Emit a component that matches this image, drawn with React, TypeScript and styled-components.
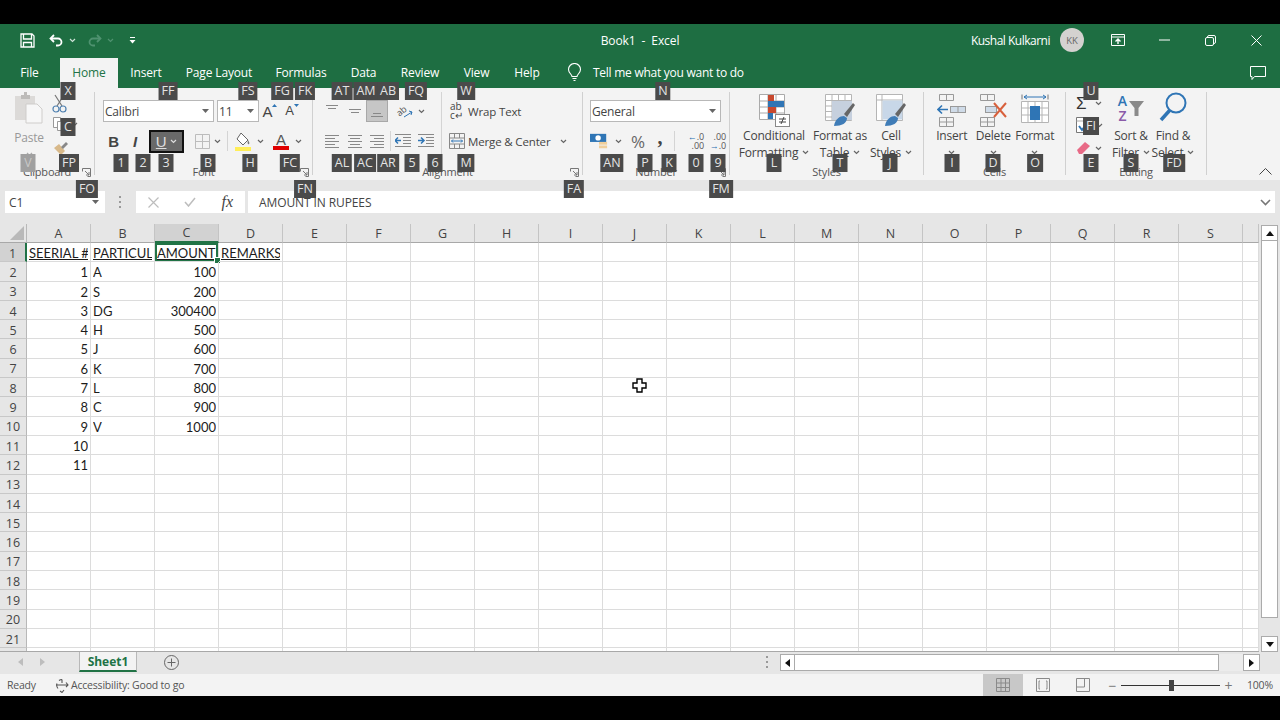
import React from 'react';
import styled, { createGlobalStyle } from 'styled-components';

const UI_FONT = '"Open Sans", "Noto Sans", sans-serif';
const GREEN = '#217346';

const GlobalStyle = createGlobalStyle`
  html, body { margin: 0; padding: 0; background: #000; }
  body { font-family: ${UI_FONT}; width: 1280px; height: 720px; overflow: hidden; }
  #root { width: 1280px; height: 720px; }
  svg { display: block; flex: none; }
`;

const Page = styled.div`
  position: relative;
  width: 1280px;
  height: 720px;
  padding: 24px 0;
  box-sizing: border-box;
  background: #000;
`;

const Excel = styled.div`
  display: flex;
  flex-direction: column;
  height: 672px;
  background: #e6e6e6;
  overflow: hidden;
`;

/* ---- title bar ---- */
const GreenHead = styled.div`
  background: #1e6e42;
  color: #fff;
  flex: none;
`;
const TitleBar = styled.div`
  display: grid;
  grid-template-columns: 1fr auto 1fr;
  align-items: center;
  height: 32px;
  font-size: 12px;
`;
const Qat = styled.div`
  display: flex;
  align-items: center;
  padding-left: 20px;
`;
const QatSlot = styled.div<{ $w: number }>`
  width: ${p => p.$w}px;
  display: flex;
  align-items: center;
`;
const WindowTitle = styled.div`
  font-size: 12px;
  letter-spacing: -0.1px;
  white-space: pre;
  padding-top: 1px;
`;
const WindowRight = styled.div`
  display: flex;
  align-items: center;
  justify-content: flex-end;
  padding-right: 1px;
`;
const UserName = styled.span`
  font-size: 12px;
  letter-spacing: -0.5px;
  margin-right: 10px;
`;
const Avatar = styled.div`
  width: 24px;
  height: 24px;
  border-radius: 50%;
  background: #d4d2d0;
  color: #666;
  font-size: 9.5px;
  display: flex;
  align-items: center;
  justify-content: center;
  margin-right: 11px;
`;
const CaptionBtn = styled.div`
  width: 46px;
  height: 32px;
  display: flex;
  align-items: center;
  justify-content: center;
`;

/* ---- tabs ---- */
const TabBar = styled.div`
  display: flex;
  align-items: flex-end;
  height: 32px;
  padding-left: 8px;
  font-size: 12px;
  letter-spacing: -0.15px;
`;
const Tab = styled.div<{ $w: number; $active?: boolean; $mr?: number }>`
  width: ${p => p.$w}px;
  margin-right: ${p => p.$mr ?? 0}px;
  height: 30px;
  padding-bottom: 2px;
  display: flex;
  align-items: center;
  justify-content: center;
  box-sizing: border-box;
  white-space: nowrap;
  background: ${p => (p.$active ? '#f3f3f3' : 'transparent')};
  color: ${p => (p.$active ? GREEN : '#fff')};
`;
const TellMe = styled.div`
  display: flex;
  align-items: center;
  gap: 11px;
  height: 30px;
  padding-bottom: 2px;
  box-sizing: border-box;
  margin-left: 15px;
  flex: 1;
  letter-spacing: -0.26px;
`;
const CommentBtn = styled.div`
  height: 30px;
  display: flex;
  align-items: center;
  padding-right: 14px;
`;

/* ---- ribbon ---- */
const Ribbon = styled.div`
  display: flex;
  height: 92px;
  padding: 4px 0 5px;
  box-sizing: border-box;
  background: #f3f3f3;
  color: #444;
  font-size: 12px;
  letter-spacing: -0.2px;
  flex: none;
`;
const Group = styled.div<{ $w: number }>`
  width: ${p => p.$w}px;
  flex: none;
  box-sizing: border-box;
  border-right: 1px solid #d0d0d0;
  display: flex;
  flex-direction: column;
`;
const GroupBody = styled.div<{ $pl?: number; $top?: number; $gap?: number }>`
  flex: 1;
  display: flex;
  min-height: 0;
  padding-left: ${p => p.$pl ?? 0}px;
  padding-top: ${p => p.$top ?? 0}px;
  gap: ${p => p.$gap ?? 0}px;
`;
const GroupLabel = styled.div`
  position: relative;
  height: 14px;
  margin-bottom: -4px;
  font-size: 11px;
  line-height: 14px;
  text-align: center;
  color: #555;
`;
const Launcher = styled.span`
  position: absolute;
  right: 3px;
  top: 3px;
`;
const Stack = styled.div<{ $gap?: number }>`
  display: flex;
  flex-direction: column;
  gap: ${p => p.$gap ?? 8}px;
`;
const AlignStack = styled(Stack)`
  width: 121px;
  height: 83px;
  box-sizing: border-box;
  margin-top: -8px;
  padding-top: 8px;
  border-right: 1px solid #d4d4d4;
`;
const Row = styled.div`
  display: flex;
  align-items: center;
  height: 22px;
`;
const Btn = styled.div<{ $w: number; $on?: boolean }>`
  width: ${p => p.$w}px;
  height: 22px;
  display: flex;
  align-items: center;
  justify-content: center;
  flex: none;
  background: ${p => (p.$on ? '#c6c6c6' : 'transparent')};
  box-shadow: ${p => (p.$on ? 'inset 0 0 0 1px #a8a8a8' : 'none')};
`;
const SmallGap = styled.div<{ $w: number }>`
  width: ${p => p.$w}px;
  height: 22px;
  flex: none;
`;
const ThinSep = styled.div`
  width: 1px;
  height: 20px;
  background: #d4d4d4;
  flex: none;
`;
const Select = styled.div<{ $w: number }>`
  width: ${p => p.$w}px;
  height: 22px;
  box-sizing: border-box;
  flex: none;
  display: flex;
  align-items: center;
  justify-content: space-between;
  padding: 0 4px 0 1px;
  background: #fff;
  border: 1px solid #b8b8b8;
  color: #444;
  font-size: 12px;
`;
const FontLetter = styled.span<{ $size?: number; $bold?: boolean; $italic?: boolean; $under?: boolean; $color?: string }>`
  font-family: "Liberation Sans", sans-serif;
  font-size: ${p => p.$size ?? 15}px;
  font-weight: ${p => (p.$bold ? 700 : 400)};
  font-style: ${p => (p.$italic ? 'italic' : 'normal')};
  text-decoration: ${p => (p.$under ? 'underline' : 'none')};
  color: ${p => p.$color ?? '#444'};
  line-height: 1;
`;
const UnderBtn = styled.div`
  width: 35px;
  height: 23px;
  flex: none;
  box-sizing: border-box;
  border: 2px solid #111;
  background: #696969;
  display: flex;
  align-items: center;
  justify-content: space-around;
  padding: 0 3px;
`;
const ColorLetter = styled.div<{ $bar: string }>`
  display: flex;
  flex-direction: column;
  align-items: center;
  width: 18px;
  color: #555;
  font-family: "Liberation Sans", sans-serif;
  font-size: 15px;
  line-height: 13px;
  &::after {
    content: '';
    width: 16px;
    height: 4px;
    background: ${p => p.$bar};
  }
`;
const WrapGlyph = styled.div`
  font-size: 10px;
  line-height: 9px;
  width: 15px;
  color: #444;
  letter-spacing: 0;
`;
const TextBtn = styled.div<{ $w: number; $gap: number }>`
  display: flex;
  align-items: center;
  width: ${p => p.$w}px;
  gap: ${p => p.$gap}px;
  height: 22px;
  font-size: 11.5px;
  letter-spacing: -0.15px;
  color: #444;
  white-space: nowrap;
`;
const DecimalGlyph = styled.div`
  font-size: 9px;
  line-height: 9px;
  color: #555;
  letter-spacing: 0;
  text-align: right;
  & b {
    color: #2a6fb0;
    font-weight: 700;
  }
`;
const Percent = styled.span`
  font-size: 17px;
  color: #666;
  letter-spacing: 0;
`;
const Comma = styled.span`
  font-size: 20px;
  line-height: 10px;
  margin-top: -8px;
  font-weight: 700;
  color: #444;
  font-family: "Liberation Serif", serif;
`;
const BigBtn = styled.div<{ $w: number }>`
  width: ${p => p.$w}px;
  flex: none;
  display: flex;
  flex-direction: column;
  align-items: center;
`;
const IconSlot = styled.div<{ $h?: number }>`
  height: ${p => p.$h ?? 36}px;
  display: flex;
  align-items: flex-start;
  justify-content: center;
`;
const BigText = styled.div<{ $color?: string }>`
  line-height: 16px;
  text-align: center;
  white-space: nowrap;
  color: ${p => p.$color ?? '#444'};
`;
const ChevLine = styled.span`
  display: flex;
  align-items: center;
  justify-content: center;
  gap: 4px;
  height: 16px;
  white-space: nowrap;
`;
const SmallCol = styled.div`
  display: flex;
  flex-direction: column;
  width: 36px;
  flex: none;
`;
const SmallItem = styled.div<{ $h: number; $pl?: number }>`
  height: ${p => p.$h}px;
  display: flex;
  align-items: center;
  gap: 4px;
  padding-left: ${p => p.$pl ?? 10}px;
`;
const Sigma = styled.span`
  font-family: "Liberation Sans", sans-serif;
  font-size: 17px;
  line-height: 1;
  color: #333;
  width: 15px;
`;
const SortGlyph = styled.div`
  display: flex;
  align-items: center;
  gap: 2px;
  margin-top: 1px;
`;
const AzText = styled.div`
  font-size: 14px;
  line-height: 15px;
  font-weight: 600;
  color: #2f75b5;
  letter-spacing: 0;
  text-align: center;
  & i {
    display: block;
    font-style: normal;
    color: #8a5aa8;
  }
`;
const Collapse = styled.div`
  flex: 1;
  display: flex;
  align-items: flex-end;
  justify-content: flex-end;
  padding: 0 8px 0 0;
`;

/* ---- formula bar ---- */
const FormulaBar = styled.div`
  display: flex;
  align-items: center;
  height: 44px;
  padding: 0 5px 0 5px;
  box-sizing: border-box;
  flex: none;
  background: #e6e6e6;
  color: #444;
  font-size: 12px;
`;
const NameBox = styled.div`
  width: 100px;
  height: 22px;
  box-sizing: border-box;
  background: #fff;
  display: flex;
  align-items: center;
  justify-content: space-between;
  padding: 0 6px 0 4px;
`;
const Grip = styled.div`
  width: 31px;
  display: flex;
  justify-content: center;
`;
const FxBox = styled.div`
  width: 109px;
  height: 22px;
  background: #fff;
  display: flex;
  align-items: center;
  justify-content: space-between;
  padding: 0 12px 0 12px;
  box-sizing: border-box;
  margin-right: 3px;
`;
const FxText = styled.span`
  font-family: "Liberation Serif", serif;
  font-style: italic;
  font-size: 16px;
  color: #444;
`;
const FormulaInput = styled.div`
  flex: 1;
  height: 22px;
  background: #fff;
  display: flex;
  align-items: center;
  justify-content: space-between;
  padding: 0 4px 0 11px;
  box-sizing: border-box;
  letter-spacing: -0.1px;
`;

/* ---- sheet ---- */
const SheetArea = styled.div`
  display: flex;
  height: 428px;
  flex: none;
  background: #e6e6e6;
`;
const SheetGrid = styled.div`
  width: 1259px;
  height: 427px;
  overflow: hidden;
  flex: none;
  display: grid;
  grid-template-columns: 27px repeat(19, 64px) 16px;
  grid-template-rows: 19px repeat(22, 19.3px);
  background: #fff;
  border-bottom: 1px solid #a8a8a8;
`;
const Corner = styled.div`
  position: relative;
  background: #e6e6e6;
  border-right: 1px solid #b8b8b8;
  border-bottom: 1px solid #a8a8a8;
  box-sizing: border-box;
  &::after {
    content: '';
    position: absolute;
    right: 2px;
    bottom: 2px;
    width: 14px;
    height: 14px;
    background: #b9b9b9;
    clip-path: polygon(100% 0, 100% 100%, 0 100%);
  }
`;
const ColHead = styled.div<{ $active?: boolean }>`
  background: ${p => (p.$active ? '#d2d2d2' : '#e6e6e6')};
  border-right: 1px solid #c4c4c4;
  border-bottom: ${p => (p.$active ? `2px solid ${GREEN}` : '1px solid #a8a8a8')};
  box-sizing: border-box;
  display: flex;
  align-items: center;
  justify-content: center;
  font-size: 12.5px;
  color: #444;
`;
const RowHead = styled.div<{ $active?: boolean }>`
  background: ${p => (p.$active ? '#d2d2d2' : '#e6e6e6')};
  border-right: ${p => (p.$active ? `2px solid ${GREEN}` : '1px solid #b8b8b8')};
  border-bottom: 1px solid #c8c8c8;
  box-sizing: border-box;
  display: flex;
  align-items: center;
  justify-content: center;
  padding-top: 2px;
  font-size: 12.5px;
  color: #444;
`;
const Cell = styled.div<{ $selected?: boolean }>`
  position: relative;
  border-right: 1px solid #dcdcdc;
  border-bottom: 1px solid #dcdcdc;
  box-sizing: border-box;
  box-shadow: ${p => (p.$selected ? `inset 0 0 0 2px ${GREEN}` : 'none')};
  &::after {
    content: '';
    display: ${p => (p.$selected ? 'block' : 'none')};
    position: absolute;
    right: -3px;
    bottom: -3px;
    width: 5px;
    height: 5px;
    background: ${GREEN};
    border: 1px solid #fff;
  }
`;
const CellText = styled.div<{ $right?: boolean; $under?: boolean; $spaced?: boolean }>`
  height: 100%;
  margin: 0 2px;
  overflow: hidden;
  font-family: Lato, "Open Sans", sans-serif;
  font-size: 13px;
  line-height: 20px;
  color: #1c1c1c;
  white-space: nowrap;
  word-spacing: ${p => (p.$spaced ? '8px' : 'normal')};
  text-align: ${p => (p.$right ? 'right' : 'left')};
  text-decoration: ${p => (p.$under ? 'underline' : 'none')};
`;
const VScroll = styled.div`
  width: 17px;
  margin-left: 2px;
  display: flex;
  flex-direction: column;
  padding-top: 1px;
`;
const ScrollBtn = styled.div<{ $w?: number; $h?: number }>`
  width: ${p => p.$w ?? 17}px;
  height: ${p => p.$h ?? 16}px;
  box-sizing: border-box;
  flex: none;
  background: #fff;
  border: 1px solid #ababab;
  display: flex;
  align-items: center;
  justify-content: center;
`;
const VThumb = styled.div`
  height: 377px;
  box-sizing: border-box;
  background: #fff;
  border: 1px solid #ababab;
  border-top: none;
  flex: none;
`;
const VTrack = styled.div`
  flex: 1;
`;

/* ---- sheet tabs + status ---- */
const TabsRow = styled.div`
  height: 22px;
  flex: none;
  display: flex;
  align-items: flex-start;
  background: #e6e6e6;
  color: #555;
`;
const NavArrows = styled.div`
  width: 79px;
  height: 20px;
  display: flex;
  align-items: center;
  padding-left: 18px;
  gap: 17px;
  box-sizing: border-box;
`;
const SheetTab = styled.div`
  width: 58px;
  height: 20px;
  box-sizing: border-box;
  background: #f3f3f3;
  color: ${GREEN};
  font-size: 12px;
  font-weight: 700;
  display: flex;
  align-items: center;
  justify-content: center;
  border-left: 1px solid #b8b8b8;
  border-right: 1px solid #b8b8b8;
  border-bottom: 2px solid ${GREEN};
`;
const AddSheet = styled.div`
  width: 68px;
  height: 20px;
  display: flex;
  align-items: center;
  justify-content: center;
`;
const Grow = styled.div`
  flex: 1;
`;
const TabGrip = styled.div`
  width: 25px;
  height: 20px;
  display: flex;
  align-items: center;
  justify-content: center;
`;
const HScroll = styled.div`
  width: 480px;
  display: flex;
  margin: 2px 20px 0 0;
`;
const HThumb = styled.div`
  width: 424px;
  height: 17px;
  box-sizing: border-box;
  background: #fff;
  border: 1px solid #ababab;
  border-left: none;
`;
const HTrack = styled.div`
  flex: 1;
  background: #ececec;
`;
const StatusBar = styled.div`
  height: 22px;
  flex: none;
  background: #f3f3f3;
  color: #555;
  display: flex;
  align-items: center;
  font-size: 10.5px;
  letter-spacing: -0.2px;
  padding-left: 7px;
`;
const Ready = styled.span`
  width: 48px;
`;
const Access = styled.div`
  display: flex;
  align-items: center;
  gap: 2px;
  flex: 1;
`;
const ViewBtn = styled.div<{ $on?: boolean }>`
  width: 40px;
  height: 22px;
  display: flex;
  align-items: center;
  justify-content: center;
  background: ${p => (p.$on ? '#c8c8c8' : 'transparent')};
`;
const ZoomBox = styled.div`
  display: flex;
  align-items: center;
  width: 177px;
`;
const ZoomSign = styled.span`
  width: 19px;
  text-align: center;
  font-size: 14px;
  color: #777;
`;
const ZoomTrack = styled.div`
  position: relative;
  width: 99px;
  height: 1px;
  margin: 0 -1px;
  background: #333;
`;
const ZoomThumb = styled.div`
  position: absolute;
  left: 48px;
  top: -5px;
  width: 5px;
  height: 11px;
  background: #444;
`;
const ZoomPct = styled.span`
  margin-left: 9px;
  white-space: nowrap;
`;

/* ---- things lying over the page ---- */
const KeyTip = styled.div<{ $x: number; $y: number; $dim?: boolean }>`
  position: absolute;
  left: ${p => p.$x}px;
  top: ${p => p.$y}px;
  transform: translate(-50%, -50%);
  height: 18px;
  min-width: 15px;
  padding: 0 3px;
  box-sizing: border-box;
  background: ${p => (p.$dim ? '#a0a0a0' : '#4a4a4a')};
  color: ${p => (p.$dim ? '#c8c8c8' : '#e4e4e4')};
  font-size: 12.5px;
  line-height: 18px;
  text-align: center;
  white-space: nowrap;
`;
const Pointer = styled.div`
  position: absolute;
  left: 632px;
  top: 378px;
`;

/* ---- icons ---- */
const Chev = ({ c = '#666' }: { c?: string }) => (
  <svg width="7" height="5" viewBox="0 0 7 5"><path d="M1 1l2.5 2.5L6 1" fill="none" stroke={c} strokeWidth="1.2" /></svg>
);
const WideChev = () => (
  <svg width="11" height="7" viewBox="0 0 11 7"><path d="M1 1l4.500 4.500L10 1" fill="none" stroke="#777" strokeWidth="1.600" /></svg>
);
const Caret = () => (
  <svg width="7" height="4" viewBox="0 0 7 4"><path d="M0 0h7L3.5 4z" fill="#666" /></svg>
);
const LauncherIcon = () => (
  <svg width="9" height="9" viewBox="0 0 9 9"><path d="M.5 3.5v-3h8v8h-3M3 3l4 4M7 4v3H4" fill="none" stroke="#777" /></svg>
);
const SaveIcon = () => (
  <svg width="15" height="15" viewBox="0 0 15 15" fill="none" stroke="#fff" strokeWidth="1.3">
    <path d="M1 1h11l2 2v11H1z" /><path d="M3.5 1v5h8V1M3.5 14V9.5h8V14" />
  </svg>
);
const UndoIcon = ({ c = '#fff' }: { c?: string }) => (
  <svg width="15" height="13" viewBox="0 0 15 13" fill="none" stroke={c} strokeWidth="1.8">
    <path d="M5 1L1.5 4.5 5 8" /><path d="M2 4.5h7a3.5 3.5 0 0 1 0 7H7" />
  </svg>
);
const RedoIcon = () => (
  <svg width="15" height="13" viewBox="0 0 15 13" fill="none" stroke="#4f9270" strokeWidth="1.8">
    <path d="M10 1l3.5 3.5L10 8" /><path d="M13 4.5H6a3.5 3.5 0 0 0 0 7h2" />
  </svg>
);
const QatMore = () => (
  <svg width="7" height="7" viewBox="0 0 7 7"><path d="M1 .5h5" stroke="#fff" /><path d="M.5 3h6L3.5 6.5z" fill="#fff" /></svg>
);
const RibbonDisplayIcon = () => (
  <svg width="14" height="12" viewBox="0 0 14 12" fill="none" stroke="#fff"><path d="M.5.500h13v11H.5zM.5 3h13" /><path d="M7 10V5M4.500 7.500L7 5l2.500 2.500" strokeWidth="1.400" /></svg>
);
const MinIcon = () => <svg width="11" height="2" viewBox="0 0 11 2"><path d="M0 1h11" stroke="#fff" /></svg>;
const RestoreIcon = () => (
  <svg width="11" height="11" viewBox="0 0 11 11" fill="none" stroke="#fff"><rect x=".5" y="2.500" width="8" height="8" rx="1.500" /><path d="M2.500 2.500v-.5a1.500 1.500 0 0 1 1.500-1.500h5a1.500 1.500 0 0 1 1.500 1.500v5a1.500 1.500 0 0 1-1.500 1.500h-.5" /></svg>
);
const CloseIcon = () => <svg width="11" height="11" viewBox="0 0 11 11"><path d="M.5.500l10 10M10.500.500l-10 10" stroke="#fff" /></svg>;
const BulbIcon = () => (
  <svg width="15" height="18" viewBox="0 0 15 18" fill="none" stroke="#fff" strokeWidth="1.100">
    <path d="M5 13.500c0-2-3.500-3.500-3.500-7a6 6 0 0 1 12 0c0 3.500-3.500 5-3.500 7zM5.500 15.500h4M6.500 17.500h2" />
  </svg>
);
const CommentIcon = () => (
  <svg width="16" height="15" viewBox="0 0 16 15" fill="none" stroke="#fff"><path d="M.5.500h15v10h-11l-2.500 3v-3H.5z" /></svg>
);
const PasteIcon = () => (
  <svg width="28" height="32" viewBox="0 0 28 32">
    <path d="M0 4h20v24H0z" fill="#dcdad8" />
    <path d="M6 3h3V0h3v3h3v4H6z" fill="#bdbbb9" />
    <path d="M11 12h11l5 5v14H11z" fill="#f7f7f7" stroke="#cfcdcb" />
  </svg>
);
const ScissorsIcon = () => (
  <svg width="15" height="19" viewBox="0 0 15 19" fill="none">
    <path d="M3 1l7 11M12 1L5 12" stroke="#777" strokeWidth="1.200" />
    <circle cx="4" cy="15" r="3" stroke="#4f80b0" strokeWidth="1.200" />
    <circle cx="11" cy="15" r="3" stroke="#4f80b0" strokeWidth="1.200" />
  </svg>
);
const CopyIcon = () => (
  <svg width="14" height="14" viewBox="0 0 14 14" fill="#fff" stroke="#999"><path d="M.5.500h7v10h-7z" /><path d="M4.500 4.500h6l3 3v6h-9z" /></svg>
);
const BrushIcon = () => (
  <svg width="16" height="15" viewBox="0 0 16 15">
    <path d="M1 7l5-4 6 7-4 4z" fill="#d8b98a" />
    <path d="M8 6l5-5 2 2-5 5z" fill="#888" />
  </svg>
);
const GrowGlyph = ({ up }: { up: boolean }) => (
  <svg width="5" height="3" viewBox="0 0 5 3"><path d={up ? 'M0 3h5L2.500 0z' : 'M0 0h5L2.500 3z'} fill="#2f75b5" /></svg>
);
const GrowMark = styled.span`
  display: flex;
  align-items: flex-start;
  height: 15px;
`;
const BordersIcon = () => (
  <svg width="15" height="15" viewBox="0 0 15 15" fill="none" stroke="#bcbcbc"><path d="M.5.500h14v14H.5zM7.500.500v14M.5 7.500h14" /></svg>
);
const FillIcon = () => (
  <svg width="18" height="19" viewBox="0 0 18 19">
    <path d="M7 1l7 7-5 5-6-6z" fill="#fff" stroke="#666" />
    <path d="M14 8c1 2 2 3 1 4s-2-1-1-4z" fill="#777" />
    <rect x="1" y="15" width="16" height="4" fill="#ffee58" />
  </svg>
);
const LinesIcon = ({ ys, xs }: { ys: number[]; xs?: [number, number][] }) => (
  <svg width="14" height="14" viewBox="0 0 14 14" stroke="#888">
    {ys.map((y, i) => {
      const [a, b] = xs ? xs[i % xs.length] : [0, 14];
      return <path key={y} d={`M${a} ${y + 0.5}H${b}`} />;
    })}
  </svg>
);
const IndentIcon = ({ flip }: { flip?: boolean }) => (
  <svg width="16" height="14" viewBox="0 0 16 14">
    <path d="M0 .5h16M8 3.500h8M8 6.500h8M8 9.500h8M0 12.500h16" stroke="#888" />
    <path d={flip ? 'M0 6.500h6M3 3.500l3 3-3 3' : 'M6 6.500H0M3 3.500l-3 3 3 3'} fill="none" stroke="#2f75b5" strokeWidth="1.500" />
  </svg>
);
const OrientIcon = () => (
  <svg width="17" height="16" viewBox="0 0 17 16" overflow="visible">
    <text x="1" y="11" fontSize="9" fill="#555" fontFamily="Open Sans" transform="rotate(-40 6 9)">ab</text>
    <path d="M8 14l8-5M13 8l3 1-1 3" fill="none" stroke="#2f75b5" />
  </svg>
);
const MergeIcon = () => (
  <svg width="16" height="16" viewBox="0 0 16 16" fill="none" stroke="#888">
    <path d="M.5.500h15v15H.5zM.5 5h15M.5 11h15M5.500.500V5M10.500.500V5M5.500 11v4.500M10.500 11v4.500" />
    <path d="M2.500 8h11M4 6.500L2.500 8 4 9.500M12 6.500L13.500 8 12 9.500" stroke="#2f75b5" />
  </svg>
);
const AccountingIcon = () => (
  <svg width="18" height="17" viewBox="0 0 20 17">
    <rect x="0" y="0" width="18" height="9" fill="#2f75b5" />
    <circle cx="9" cy="4.500" r="3" fill="#fff" />
    <rect x="10" y="9" width="9" height="3" fill="#f0cf9b" />
    <rect x="10" y="13" width="9" height="3" fill="#f0cf9b" />
  </svg>
);
const ConditionalIcon = () => (
  <svg width="31" height="33" viewBox="0 0 31 33">
    <path d="M.5.500h25v25H.5zM.5 7h25M.5 13h25M.5 19h25M9 .500v25M17 .500v25" fill="#fff" stroke="#aaa" />
    <rect x="9" y="1" width="6" height="6" fill="#c8492f" />
    <rect x="9" y="7" width="16" height="6" fill="#2f75b5" />
    <rect x="9" y="13" width="8" height="6" fill="#c8492f" />
    <rect x="9" y="19" width="5" height="6" fill="#2f75b5" />
    <rect x="16.500" y="20.500" width="14" height="12" fill="#fff" stroke="#888" />
    <path d="M20 25h7M20 28h7M25 23l-3 7" stroke="#444" fill="none" />
  </svg>
);
const TableStyleIcon = () => (
  <svg width="30" height="34" viewBox="0 0 30 34">
    <path d="M.5.500h26v26H.5zM.5 6.500h26M.5 12h26M.5 17.500h26M.5 23h26M7 .500v26M13.500.500v26M20 .500v26" fill="#fff" stroke="#b5b5b5" />
    <rect x="7" y="7" width="20" height="19" fill="#c6d0de" />
    <path d="M19 20L28 9l2 2-8 12z" fill="#666" />
    <path d="M9 32c1-7 6-10 10-10l3 2c0 5-5 8-13 8z" fill="#3f7cb7" />
  </svg>
);
const CellStyleIcon = () => (
  <svg width="30" height="33" viewBox="0 0 30 33">
    <path d="M.5.500h26v26H.5zM.5 6h26M6 .500v26" fill="#fff" stroke="#b5b5b5" />
    <rect x="6.500" y="6.500" width="20" height="19" fill="#c8d7e8" />
    <path d="M19 20L28 9l2 2-8 12z" fill="#666" />
    <path d="M9 32c1-7 6-10 10-10l3 2c0 5-5 8-13 8z" fill="#3f7cb7" />
  </svg>
);
const InsertIcon = () => (
  <svg width="29" height="33" viewBox="0 0 29 33" fill="none" stroke="#999">
    <path d="M2.500.500h14v6h-14zM9.500.500v6M2.500 23.500h14v9h-14zM2.500 28h14M9.500 23.500v9" />
    <rect x="13.500" y="12.500" width="15" height="6" fill="#cfdbe8" />
    <path d="M21 12.500v6" />
    <path d="M1 15.500h10M5 11.500l-4 4 4 4" stroke="#2f75b5" strokeWidth="1.600" />
  </svg>
);
const DeleteIcon = () => (
  <svg width="29" height="33" viewBox="0 0 29 33" fill="none" stroke="#999">
    <path d="M1.500.500h14v6h-14zM8.500.500v6M1.500 23.500h14v9h-14zM1.500 28h14M8.500 23.500v9" />
    <rect x="6.500" y="12.500" width="11" height="6" fill="#cfdbe8" />
    <path d="M15 9l12 14M27 9L15 23" stroke="#d8603c" strokeWidth="2" />
  </svg>
);
const FormatIcon = () => (
  <svg width="28" height="35" viewBox="0 0 28 35" fill="none" stroke="#b5b5b5">
    <path d="M1 .5v5M27 .5v5" stroke="#777" />
    <path d="M3 3h22M6 1L3 3l3 2M22 1l3 2-3 2" stroke="#2f75b5" />
    <path d="M.5 7.500h27v21H.5zM.5 14h27M.5 21h27M7 7.500v21M14 7.500v21M21 7.500v21" fill="#fff" />
    <rect x="9" y="12" width="10" height="14" fill="#2f75b5" stroke="none" />
  </svg>
);
const FillDownIcon = () => (
  <svg width="16" height="17" viewBox="0 0 16 17" fill="none">
    <path d="M.5.500h15v15H.5z" stroke="#777" fill="#fff" />
    <path d="M.5 4h15" stroke="#aaa" />
    <path d="M3 9l3 4 5-6" stroke="#2f75b5" strokeWidth="2" />
  </svg>
);
const EraserIcon = () => (
  <svg width="15" height="14" viewBox="0 0 15 14"><path d="M1 9l8-8 5 4-8 8H3z" fill="#e86a86" /></svg>
);
const FunnelIcon = () => (
  <svg width="15" height="15" viewBox="0 0 15 15"><path d="M0 0h15L9.500 7v8h-4V7z" fill="#8a8a8a" /></svg>
);
const FindIcon = () => (
  <svg width="28" height="30" viewBox="0 0 28 30" fill="none">
    <circle cx="17" cy="11" r="9.500" stroke="#2f75b5" strokeWidth="2" />
    <path d="M11 18L2 28" stroke="#2f75b5" strokeWidth="3.500" />
  </svg>
);
const CollapseIcon = () => (
  <svg width="13" height="8" viewBox="0 0 13 8"><path d="M.5 7.500l6-6 6 6" fill="none" stroke="#444" /></svg>
);
const GripDots = () => (
  <svg width="3" height="12" viewBox="0 0 3 12" fill="#999"><rect width="2" height="2" /><rect y="5" width="2" height="2" /><rect y="10" width="2" height="2" /></svg>
);
const XMark = () => <svg width="11" height="11" viewBox="0 0 11 11"><path d="M.5.500l10 10M10.500.500l-10 10" stroke="#bdbdbd" strokeWidth="1.200" /></svg>;
const CheckMark = () => <svg width="12" height="10" viewBox="0 0 12 10"><path d="M1 5l3.500 4L11 1" fill="none" stroke="#bdbdbd" strokeWidth="1.500" /></svg>;
const ArrowUp = () => <svg width="8" height="5" viewBox="0 0 8 5"><path d="M0 5h8L4 0z" fill="#111" /></svg>;
const ArrowDown = () => <svg width="8" height="5" viewBox="0 0 8 5"><path d="M0 0h8L4 5z" fill="#111" /></svg>;
const ArrowLeft = () => <svg width="5" height="8" viewBox="0 0 5 8"><path d="M5 0v8L0 4z" fill="#111" /></svg>;
const ArrowRight = ({ c = '#111' }: { c?: string }) => <svg width="5" height="8" viewBox="0 0 5 8"><path d="M0 0v8l5-4z" fill={c} /></svg>;
const NavLeft = () => <svg width="5" height="8" viewBox="0 0 5 8"><path d="M5 0v8L0 4z" fill="#bdbdbd" /></svg>;
const AddIcon = () => (
  <svg width="15" height="15" viewBox="0 0 15 15" fill="none" stroke="#666"><circle cx="7.500" cy="7.500" r="7" /><path d="M7.500 3.500v8M3.500 7.500h8" /></svg>
);
const AccessIcon = () => (
  <svg width="14" height="15" viewBox="0 0 14 15" fill="none" stroke="#555" strokeWidth="1.100">
    <path d="M4 2.500A5 5 0 0 1 7 1.500M2 5.500a5 5 0 0 0 1 5M5 13l2 1.500L9 12M11 4.500l2 2.500-2 2M1 7h12M7 1.500V5" />
  </svg>
);
const NormalViewIcon = () => (
  <svg width="14" height="14" viewBox="0 0 14 14" fill="none" stroke="#8a8a8a"><path d="M.5.500h13v13H.5zM.5 5h13M.5 9.500h13M5 .500v13M9.500.500v13" /></svg>
);
const PageLayoutIcon = () => (
  <svg width="14" height="14" viewBox="0 0 14 14" fill="none" stroke="#8a8a8a"><path d="M.5.500h13v13H.5z" /><path d="M4 3H3v8h1M10 3h1v8h-1" /></svg>
);
const BreakViewIcon = () => (
  <svg width="14" height="14" viewBox="0 0 14 14" fill="none" stroke="#8a8a8a"><path d="M.5.500h13v13H.5zM.5 9h8V.500" /></svg>
);
const PointerIcon = () => (
  <svg width="15" height="15" viewBox="0 0 15 15"><path d="M5 1h5v4h4v5h-4v4H5v-4H1V5h4z" fill="#fff" stroke="#000" strokeWidth="1.400" /></svg>
);

/* ---- data ---- */
const COLS = 'ABCDEFGHIJKLMNOPQRST'.split('');
const TABS: [string, number, number][] = [
  ['File', 43, 9], ['Home', 58, 0], ['Insert', 56, 0], ['Page Layout', 90, 0],
  ['Formulas', 74, 0], ['Data', 51, 0], ['Review', 62, 0], ['View', 51, 0], ['Help', 50, 0],
];
const CELLS: Record<string, string> = {
  A1: 'SEERIAL #', B1: 'PARTICULARS', C1: 'AMOUNT IN RUPEES', D1: 'REMARKS',
  A2: '1', B2: 'A', C2: '100',
  A3: '2', B3: 'S', C3: '200',
  A4: '3', B4: 'DG', C4: '300400',
  A5: '4', B5: 'H', C5: '500',
  A6: '5', B6: 'J', C6: '600',
  A7: '6', B7: 'K', C7: '700',
  A8: '7', B8: 'L', C8: '800',
  A9: '8', B9: 'C', C9: '900',
  A10: '9', B10: 'V', C10: '1000',
  A11: '10', A12: '11',
};
const TIPS: [string, number, number][] = [
  ['X', 68, 91], ['FF', 168, 91], ['FS', 248, 91], ['FG', 282, 91], ['FK', 305, 91],
  ['AT', 342, 91], ['AM', 366, 91], ['AB', 388, 91], ['FQ', 416, 91], ['W', 466, 91],
  ['N', 663, 91], ['U', 1091, 91], ['C', 68, 127], ['FI', 1091, 126],
  ['V', 28, 163], ['FP', 69, 163], ['1', 121, 163], ['2', 143, 163], ['3', 166, 163],
  ['B', 208, 163], ['H', 250, 163], ['FC', 290, 163], ['AL', 342, 163], ['AC', 365, 163],
  ['AR', 388, 163], ['5', 412, 163], ['6', 435, 163], ['M', 466, 163], ['AN', 612, 163],
  ['P', 645, 163], ['K', 669, 163], ['0', 696, 163], ['9', 718, 163], ['L', 774, 163],
  ['T', 840, 163], ['J', 890, 163], ['I', 952, 163], ['D', 993, 163], ['O', 1035, 163],
  ['E', 1091, 163], ['S', 1131, 163], ['FD', 1174, 163],
  ['FO', 87, 189], ['FN', 305, 189], ['FA', 574, 189], ['FM', 721, 189],
];

const SheetBody = () => {
  const rows = Array.from({ length: 22 }, (_, i) => i + 1);
  return (
    <SheetGrid>
      <Corner />
      {COLS.map((c, i) => (
        <ColHead key={c} $active={c === 'C'}>{i < 19 ? c : ''}</ColHead>
      ))}
      {rows.map(r => (
        <React.Fragment key={r}>
          <RowHead $active={r === 1}>{r < 22 ? r : ''}</RowHead>
          {COLS.map(c => {
            const value = CELLS[c + r] ?? '';
            const numeric = r > 1 && (c === 'A' || c === 'C');
            const selected = c === 'C' && r === 1;
            return (
              <Cell key={c} $selected={selected}>
                <CellText $right={numeric} $under={r === 1} $spaced={selected}>{value}</CellText>
              </Cell>
            );
          })}
        </React.Fragment>
      ))}
    </SheetGrid>
  );
};

export default function App() {
  return (
    <Page>
      <GlobalStyle />
      <Excel>
        <GreenHead>
          <TitleBar>
            <Qat>
              <QatSlot $w={29}><SaveIcon /></QatSlot>
              <QatSlot $w={20}><UndoIcon /></QatSlot>
              <QatSlot $w={18}><Chev c="#cfe3d8" /></QatSlot>
              <QatSlot $w={20}><RedoIcon /></QatSlot>
              <QatSlot $w={22}><Chev c="#4f9270" /></QatSlot>
              <QatSlot $w={10}><QatMore /></QatSlot>
            </Qat>
            <WindowTitle>Book1  -  Excel</WindowTitle>
            <WindowRight>
              <UserName>Kushal Kulkarni</UserName>
              <Avatar>KK</Avatar>
              <CaptionBtn><RibbonDisplayIcon /></CaptionBtn>
              <CaptionBtn><MinIcon /></CaptionBtn>
              <CaptionBtn><RestoreIcon /></CaptionBtn>
              <CaptionBtn><CloseIcon /></CaptionBtn>
            </WindowRight>
          </TitleBar>
          <TabBar>
            {TABS.map(([name, w, mr]) => (
              <Tab key={name} $w={w} $mr={mr} $active={name === 'Home'}>{name}</Tab>
            ))}
            <TellMe><BulbIcon />Tell me what you want to do</TellMe>
            <CommentBtn><CommentIcon /></CommentBtn>
          </TabBar>
        </GreenHead>

        <Ribbon>
          <Group $w={95}>
            <GroupBody $pl={11}>
              <BigBtn $w={36}>
                <IconSlot $h={38}><PasteIcon /></IconSlot>
                <BigText $color="#999">Paste</BigText>
                <ChevLine><Chev c="#aaa" /></ChevLine>
              </BigBtn>
              <SmallCol>
                <SmallItem $h={22} $pl={5}><ScissorsIcon /></SmallItem>
                <SmallItem $h={20} $pl={6}><CopyIcon /><Chev /></SmallItem>
                <SmallItem $h={28} $pl={6}><BrushIcon /></SmallItem>
              </SmallCol>
            </GroupBody>
            <GroupLabel>Clipboard<Launcher><LauncherIcon /></Launcher></GroupLabel>
          </Group>

          <Group $w={218}>
            <GroupBody $pl={8} $top={8}>
              <Stack>
                <Row>
                  <Select $w={111}>Calibri<Caret /></Select>
                  <SmallGap $w={3} />
                  <Select $w={42}>11<Caret /></Select>
                  <Btn $w={22}><GrowMark><FontLetter $size={15}>A</FontLetter><GrowGlyph up /></GrowMark></Btn>
                  <Btn $w={22}><GrowMark><FontLetter $size={13}>A</FontLetter><GrowGlyph up={false} /></GrowMark></Btn>
                </Row>
                <Row>
                  <Btn $w={21}><FontLetter $bold>B</FontLetter></Btn>
                  <Btn $w={22}><FontLetter $italic $bold>I</FontLetter></Btn>
                  <SmallGap $w={3} />
                  <UnderBtn><FontLetter $under $color="#ddd">U</FontLetter><Chev c="#ddd" /></UnderBtn>
                  <SmallGap $w={8} />
                  <Btn $w={20}><BordersIcon /></Btn>
                  <Btn $w={11}><Chev /></Btn>
                  <SmallGap $w={4} />
                  <ThinSep />
                  <SmallGap $w={3} />
                  <Btn $w={24}><FillIcon /></Btn>
                  <Btn $w={11}><Chev /></Btn>
                  <SmallGap $w={3} />
                  <Btn $w={24}><ColorLetter $bar="#e00000">A</ColorLetter></Btn>
                  <Btn $w={11}><Chev /></Btn>
                </Row>
              </Stack>
            </GroupBody>
            <GroupLabel>Font<Launcher><LauncherIcon /></Launcher></GroupLabel>
          </Group>

          <Group $w={270}>
            <GroupBody $pl={8} $top={8}>
              <AlignStack>
                <Row>
                  <Btn $w={22}><LinesIcon ys={[1, 4]} xs={[[1, 13], [3, 11]]} /></Btn>
                  <Btn $w={23}><LinesIcon ys={[5, 8]} xs={[[1, 13], [3, 11]]} /></Btn>
                  <Btn $w={22} $on><LinesIcon ys={[9, 12]} xs={[[3, 11], [1, 13]]} /></Btn>
                  <SmallGap $w={4} />
                  <Btn $w={24}><OrientIcon /></Btn>
                  <Btn $w={10}><Chev /></Btn>
                </Row>
                <Row>
                  <Btn $w={22}><LinesIcon ys={[1, 4, 7, 10, 13]} xs={[[0, 14], [0, 10]]} /></Btn>
                  <Btn $w={23}><LinesIcon ys={[1, 4, 7, 10, 13]} xs={[[0, 14], [2, 12]]} /></Btn>
                  <Btn $w={22}><LinesIcon ys={[1, 4, 7, 10, 13]} xs={[[0, 14], [4, 14]]} /></Btn>
                  <SmallGap $w={2} />
                  <ThinSep />
                  <Btn $w={23}><IndentIcon /></Btn>
                  <Btn $w={23}><IndentIcon flip /></Btn>
                </Row>
              </AlignStack>
              <Stack>
                <Row>
                  <SmallGap $w={8} />
                  <TextBtn $w={120} $gap={3}><WrapGlyph>ab<br />c↵</WrapGlyph>Wrap Text</TextBtn>
                </Row>
                <Row>
                  <SmallGap $w={7} />
                  <TextBtn $w={124} $gap={3}><MergeIcon />Merge &amp; Center<SmallGap $w={4} /><Chev /></TextBtn>
                </Row>
              </Stack>
            </GroupBody>
            <GroupLabel>Alignment<Launcher><LauncherIcon /></Launcher></GroupLabel>
          </Group>

          <Group $w={147}>
            <GroupBody $pl={7} $top={8}>
              <Stack>
                <Row><Select $w={131}>General<Caret /></Select></Row>
                <Row>
                  <Btn $w={18}><AccountingIcon /></Btn>
                  <Btn $w={20}><Chev /></Btn>
                  <Btn $w={20}><Percent>%</Percent></Btn>
                  <SmallGap $w={4} />
                  <Btn $w={16}><Comma>,</Comma></Btn>
                  <SmallGap $w={6} />
                  <ThinSep />
                  <SmallGap $w={10} />
                  <Btn $w={22}><DecimalGlyph><b>←</b>.0<br />.00</DecimalGlyph></Btn>
                  <Btn $w={22}><DecimalGlyph>.00<br /><b>→</b>.0</DecimalGlyph></Btn>
                </Row>
              </Stack>
            </GroupBody>
            <GroupLabel>Number<Launcher><LauncherIcon /></Launcher></GroupLabel>
          </Group>

          <Group $w={194}>
            <GroupBody $pl={9} $top={2}>
              <BigBtn $w={70}>
                <IconSlot $h={34}><ConditionalIcon /></IconSlot>
                <BigText>Conditional</BigText>
                <ChevLine>Formatting<Chev /></ChevLine>
              </BigBtn>
              <BigBtn $w={62}>
                <IconSlot $h={34}><TableStyleIcon /></IconSlot>
                <BigText>Format as</BigText>
                <ChevLine>Table<Chev /></ChevLine>
              </BigBtn>
              <BigBtn $w={40}>
                <IconSlot $h={34}><CellStyleIcon /></IconSlot>
                <BigText>Cell</BigText>
                <ChevLine>Styles<Chev /></ChevLine>
              </BigBtn>
            </GroupBody>
            <GroupLabel>Styles</GroupLabel>
          </Group>

          <Group $w={142}>
            <GroupBody $pl={7} $top={2}>
              <BigBtn $w={41.5}>
                <IconSlot $h={34}><InsertIcon /></IconSlot>
                <BigText>Insert</BigText>
                <ChevLine><Chev /></ChevLine>
              </BigBtn>
              <BigBtn $w={41.5}>
                <IconSlot $h={34}><DeleteIcon /></IconSlot>
                <BigText>Delete</BigText>
                <ChevLine><Chev /></ChevLine>
              </BigBtn>
              <BigBtn $w={41.5}>
                <IconSlot $h={34}><FormatIcon /></IconSlot>
                <BigText>Format</BigText>
                <ChevLine><Chev /></ChevLine>
              </BigBtn>
            </GroupBody>
            <GroupLabel>Cells</GroupLabel>
          </Group>

          <Group $w={141}>
            <GroupBody>
              <SmallCol>
                <SmallItem $h={23}><Sigma>Σ</Sigma><Chev /></SmallItem>
                <SmallItem $h={21}><FillDownIcon /><Chev /></SmallItem>
                <SmallItem $h={24}><EraserIcon /><Chev /></SmallItem>
              </SmallCol>
              <SmallGap $w={8} />
              <BigBtn $w={42}>
                <IconSlot $h={36}>
                  <SortGlyph><AzText>A<i>Z</i></AzText><FunnelIcon /></SortGlyph>
                </IconSlot>
                <BigText>Sort &amp;</BigText>
                <ChevLine>Filter<Chev /></ChevLine>
              </BigBtn>
              <BigBtn $w={42}>
                <IconSlot $h={36}><FindIcon /></IconSlot>
                <BigText>Find &amp;</BigText>
                <ChevLine>Select<Chev /></ChevLine>
              </BigBtn>
            </GroupBody>
            <GroupLabel>Editing</GroupLabel>
          </Group>

          <Collapse><CollapseIcon /></Collapse>
        </Ribbon>

        <FormulaBar>
          <NameBox>C1<Caret /></NameBox>
          <Grip><GripDots /></Grip>
          <FxBox><XMark /><CheckMark /><FxText>fx</FxText></FxBox>
          <FormulaInput>AMOUNT IN RUPEES<WideChev /></FormulaInput>
        </FormulaBar>

        <SheetArea>
          <SheetBody />
          <VScroll>
            <ScrollBtn><ArrowUp /></ScrollBtn>
            <VThumb />
            <VTrack />
            <ScrollBtn><ArrowDown /></ScrollBtn>
          </VScroll>
        </SheetArea>

        <TabsRow>
          <NavArrows><NavLeft /><ArrowRight c="#bdbdbd" /></NavArrows>
          <SheetTab>Sheet1</SheetTab>
          <AddSheet><AddIcon /></AddSheet>
          <Grow />
          <TabGrip><GripDots /></TabGrip>
          <HScroll>
            <ScrollBtn $w={15} $h={17}><ArrowLeft /></ScrollBtn>
            <HThumb />
            <HTrack />
            <ScrollBtn $h={17}><ArrowRight /></ScrollBtn>
          </HScroll>
        </TabsRow>

        <StatusBar>
          <Ready>Ready</Ready>
          <Access><AccessIcon />Accessibility: Good to go</Access>
          <ViewBtn $on><NormalViewIcon /></ViewBtn>
          <ViewBtn><PageLayoutIcon /></ViewBtn>
          <ViewBtn><BreakViewIcon /></ViewBtn>
          <ZoomBox>
            <ZoomSign>−</ZoomSign>
            <ZoomTrack><ZoomThumb /></ZoomTrack>
            <ZoomSign>+</ZoomSign>
            <ZoomPct>100%</ZoomPct>
          </ZoomBox>
        </StatusBar>
      </Excel>

      {TIPS.map(([label, x, y]) => (
        <KeyTip key={label} $x={x} $y={y} $dim={label === 'V'}>{label}</KeyTip>
      ))}
      <Pointer><PointerIcon /></Pointer>
    </Page>
  );
}
